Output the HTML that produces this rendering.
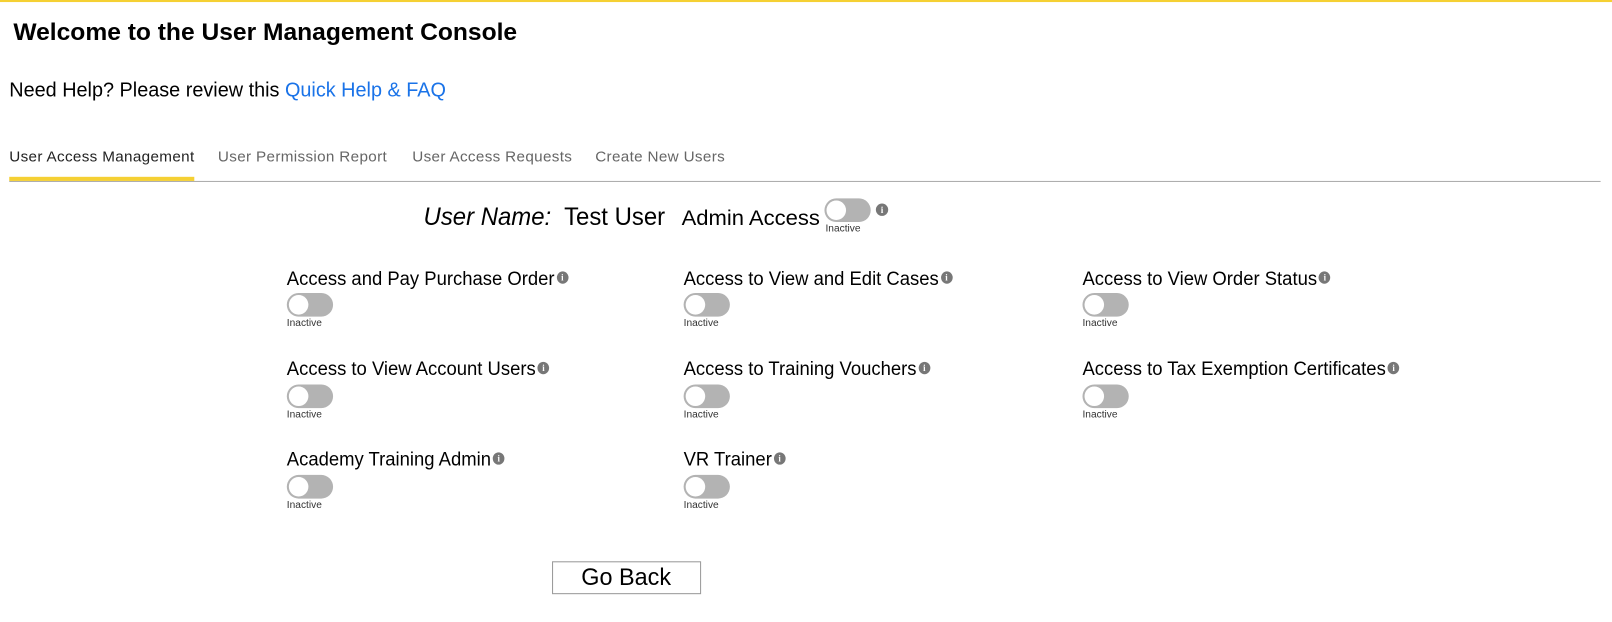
<!DOCTYPE html>
<html><head><style>
body{margin:0;width:1612px;height:622px;background:#fff;font-family:"Liberation Sans",Arial,sans-serif;color:#000;position:relative;overflow:hidden}
#w{position:absolute;left:0;top:0;width:1568px;height:605px;transform:scale(1.028);transform-origin:0 0}
.a{position:absolute;white-space:nowrap;transform-origin:0 50%}
.tg{position:absolute;width:45px;height:23px;border-radius:12px;background:#b3b3b3}
.tg::after{content:"";position:absolute;left:2px;top:2px;width:19px;height:19px;border-radius:50%;background:#fff}
.in{position:absolute;font-size:10px;color:#333;transform:scaleX(.99);transform-origin:0 0}
.i{display:inline-block;width:12px;height:12px;border-radius:50%;background:#777;color:#fff;font-size:9px;font-weight:bold;text-align:center;line-height:12px;vertical-align:4px;margin-left:2px;font-family:"Liberation Serif",serif}
.lb{position:absolute;font-size:19px;white-space:nowrap;transform:scaleX(.945);transform-origin:0 0}
</style></head><body><div id="w">
<div style="position:absolute;left:0;top:0;width:1612px;height:2px;background:#f5d033"></div>
<div class="a" style="left:13px;top:18px;font-size:23px;font-weight:bold;transform:scaleX(1.04)">Welcome to the User Management Console</div>
<div class="a" style="left:9px;top:77px;font-size:20px;transform:scaleX(.965)">Need Help? Please review this <span style="color:#1a73e8">Quick Help &amp; FAQ</span></div>
<div class="a" style="left:9px;top:144px;font-size:14px;letter-spacing:.3px;color:#222;transform:scaleX(1.06)">User Access Management</div>
<div class="a" style="left:212px;top:144px;font-size:14px;letter-spacing:.3px;color:#666;transform:scaleX(1.06)">User Permission Report</div>
<div class="a" style="left:401px;top:144px;font-size:14px;letter-spacing:.3px;color:#666;transform:scaleX(1.06)">User Access Requests</div>
<div class="a" style="left:579px;top:144px;font-size:14px;letter-spacing:.3px;color:#666;transform:scaleX(1.06)">Create New Users</div>
<div style="position:absolute;left:9px;top:176px;width:1548px;height:1px;background:#aaa"></div>
<div style="position:absolute;left:9px;top:172px;width:180px;height:4px;background:#f5d033"></div>
<div class="a" style="left:412px;top:198px;font-size:24px;transform:scaleX(.97)"><i>User Name:</i>&nbsp; Test User</div>
<div class="a" style="left:663px;top:201px;font-size:21px;transform:scaleX(1.02)">Admin Access</div>
<div class="tg" style="left:802px;top:193px"></div><div class="in" style="left:803px;top:217px">Inactive</div>
<span class="i" style="position:absolute;left:850px;top:198px">i</span>

<div class="lb" style="left:279px;top:261px">Access and Pay Purchase Order<span class="i">i</span></div>
<div class="tg" style="left:279px;top:285px"></div><div class="in" style="left:279px;top:309px">Inactive</div>
<div class="lb" style="left:665px;top:261px">Access to View and Edit Cases<span class="i">i</span></div>
<div class="tg" style="left:665px;top:285px"></div><div class="in" style="left:665px;top:309px">Inactive</div>
<div class="lb" style="left:1053px;top:261px">Access to View Order Status<span class="i">i</span></div>
<div class="tg" style="left:1053px;top:285px"></div><div class="in" style="left:1053px;top:309px">Inactive</div>

<div class="lb" style="left:279px;top:349px">Access to View Account Users<span class="i">i</span></div>
<div class="tg" style="left:279px;top:374px"></div><div class="in" style="left:279px;top:398px">Inactive</div>
<div class="lb" style="left:665px;top:349px">Access to Training Vouchers<span class="i">i</span></div>
<div class="tg" style="left:665px;top:374px"></div><div class="in" style="left:665px;top:398px">Inactive</div>
<div class="lb" style="left:1053px;top:349px">Access to Tax Exemption Certificates<span class="i">i</span></div>
<div class="tg" style="left:1053px;top:374px"></div><div class="in" style="left:1053px;top:398px">Inactive</div>

<div class="lb" style="left:279px;top:437px">Academy Training Admin<span class="i">i</span></div>
<div class="tg" style="left:279px;top:462px"></div><div class="in" style="left:279px;top:486px">Inactive</div>
<div class="lb" style="left:665px;top:437px">VR Trainer<span class="i">i</span></div>
<div class="tg" style="left:665px;top:462px"></div><div class="in" style="left:665px;top:486px">Inactive</div>

<div style="position:absolute;left:537px;top:546px;width:143px;height:30px;border:1px solid #999;text-align:center;font-size:23px;line-height:29px"><span style="display:inline-block;transform:scaleX(.99)">Go Back</span></div>
</div></body></html>
